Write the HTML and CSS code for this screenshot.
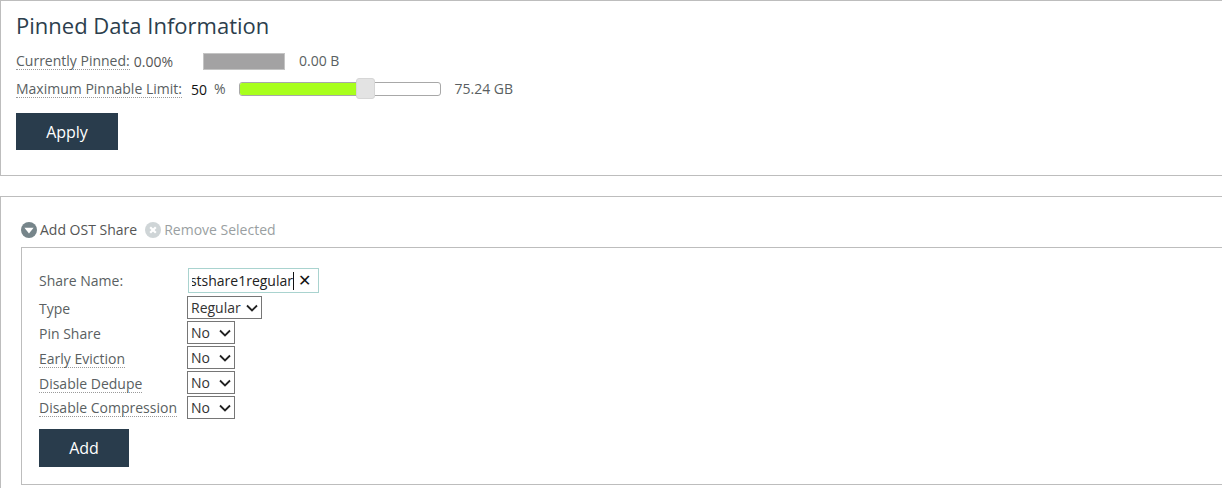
FILE: index.html
```html
<!DOCTYPE html>
<html lang="en">
<head>
<meta charset="utf-8">
<title>Pinned Data Information</title>
<link rel="stylesheet" href="styles.css">
</head>
<body>
<section class="panel pinned">
  <h1 class="title">Pinned Data Information</h1>
  <div class="row row-current">
    <span class="hint">Currently Pinned:</span>
    <span class="value pct">0.00%</span>
    <span class="usage"></span>
    <span class="size">0.00 B</span>
  </div>
  <div class="row row-limit">
    <span class="hint">Maximum Pinnable Limit:</span>
    <span class="value limit">50</span>
    <span class="unit">%</span>
    <div class="slider">
      <div class="slider-fill"></div>
      <div class="slider-handle"></div>
    </div>
    <span class="size size-limit">75.24 GB</span>
  </div>
  <button class="btn btn-apply" type="button">Apply</button>
</section>
<section class="panel shares">
  <div class="toolbar">
    <span class="tool">
      <svg class="icon" viewBox="0 0 16 16"><circle cx="8" cy="8" r="8" fill="#76858a"/><path d="M3.4 5.8h9.2L8 11.6z" fill="#fff"/></svg>
      Add OST Share
    </span>
    <span class="tool tool-off">
      <svg class="icon" viewBox="0 0 16 16"><circle cx="8" cy="8" r="8" fill="#cfd5d7"/><path d="M5.2 5.2l5.6 5.6M10.8 5.2l-5.6 5.6" stroke="#fff" stroke-width="2.2"/></svg>
      Remove Selected
    </span>
  </div>
  <div class="form-box">
    <div class="field field-name">
      <label class="label">Share Name:</label>
      <div class="text-input"><div class="text-clip"><span class="text-val">testshare1regular</span></div><span class="clear">✕</span></div>
    </div>
    <div class="field">
      <label class="label label-low">Type</label>
      <select class="select select-wide"><option>Regular</option></select>
    </div>
    <div class="field">
      <label class="label label-low">Pin Share</label>
      <select class="select"><option>No</option></select>
    </div>
    <div class="field">
      <label class="label label-low"><span class="hint">Early Eviction</span></label>
      <select class="select"><option>No</option></select>
    </div>
    <div class="field">
      <label class="label label-low"><span class="hint">Disable Dedupe</span></label>
      <select class="select"><option>No</option></select>
    </div>
    <div class="field">
      <label class="label"><span class="hint">Disable Compression</span></label>
      <select class="select"><option>No</option></select>
    </div>
    <button class="btn btn-add" type="button">Add</button>
  </div>
</section>
</body>
</html>
```
FILE: styles.css
```css
html, body { margin: 0; padding: 0; background: #fff; overflow: hidden; height: 488px; }
body { font-family: "Open Sans", "Liberation Sans", sans-serif; font-size: 14px; color: #5a5f62; }
.panel { border: 1px solid #bdbdbd; border-right: 0; box-sizing: border-box; width: 1222px; }
.pinned { height: 176px; padding: 0 15px; }
.title { margin: 0; padding-top: 9px; font-size: 22px; line-height: 30px; font-weight: 400; color: #2c3e4d; }
.row { display: flex; align-items: center; height: 20px; line-height: 20px; white-space: nowrap; }
.row-current { margin-top: 11px; }
.row-limit { margin-top: 8px; }
.hint { border-bottom: 1px dotted #9a9a9a; line-height: 17px; display: inline-block; }
.value { color: #333; font-size: 14px; position: relative; top: 1px; }
.pct { margin-left: 4px; color: #555; }
.usage { width: 82px; height: 17px; background: #a3a2a3; border: 1px solid #c4c4c4; box-sizing: border-box; margin-left: 30px; }
.size { margin-left: 14px; font-size: 14px; }
.limit { margin-left: 9px; color: #111; }
.unit { margin-left: 7px; font-size: 14px; }
.slider { position: relative; width: 202px; height: 14px; margin-left: 14px; border: 1px solid #a8a8a8; border-radius: 3px; box-sizing: border-box; background: #fff; }
.slider-fill { width: 116px; height: 100%; background: #a8ff1c; border-radius: 2px 0 0 2px; }
.slider-handle { position: absolute; left: 116px; top: -5px; width: 19px; height: 21px; background: #e3e3e3; border: 1px solid #d6d6d6; border-radius: 3px; box-sizing: border-box; }
.size-limit { margin-left: 13px; }
.btn { display: block; border: 0; background: #293c4c; color: #fff; font-family: inherit; font-size: 16px; padding: 0; }
.btn-apply { width: 102px; height: 37px; margin-top: 14px; }
.shares { margin-top: 20px; height: 292px; padding: 0 0 0 20px; border-bottom: 0; }
.toolbar { display: flex; gap: 8px; height: 50px; padding-top: 23px; box-sizing: border-box; line-height: 20px; }
.tool { display: flex; align-items: center; gap: 3px; height: 20px; color: #555; }
.tool-off { color: #9a9fa2; }
.icon { width: 16px; height: 16px; display: block; }
.form-box { border: 1px solid #bdbdbd; border-right: 0; height: 238px; padding: 20px 0 0 17px; box-sizing: border-box; }
.field { display: flex; align-items: center; height: 25px; }
.label { width: 148px; flex: none; line-height: 18px; }
.label-low { padding-top: 2px; }
.field-name { margin-bottom: 2px; }
.text-input { display: flex; align-items: center; width: 131px; height: 25px; box-sizing: border-box; border: 1px solid #a9d3cf; background: #fff; color: #222; margin-left: 1px; }
.text-clip { width: 102px; overflow: hidden; display: flex; justify-content: flex-end; margin-left: 3px; flex: none; }
.text-val { border-right: 1px solid #111; white-space: nowrap; line-height: 18px; }
.clear { margin-left: 4px; font-size: 16px; color: #111; line-height: 16px; font-family: "DejaVu Sans", sans-serif; }
.select { appearance: none; -webkit-appearance: none; width: 48px; height: 23px; padding: 0 0 0 3px; box-sizing: border-box; font-family: inherit; font-size: 14px; color: #333; border: 1px solid #767676; border-radius: 0; background: #fff url("data:image/svg+xml,%3Csvg xmlns='http://www.w3.org/2000/svg' width='12' height='8'%3E%3Cpath d='M1 1.5l5 5 5-5' fill='none' stroke='%23222' stroke-width='1.8'/%3E%3C/svg%3E") no-repeat right 3px center; }
.select-wide { width: 75px; }
.btn-add { width: 90px; height: 38px; margin-top: 9px; }
```
